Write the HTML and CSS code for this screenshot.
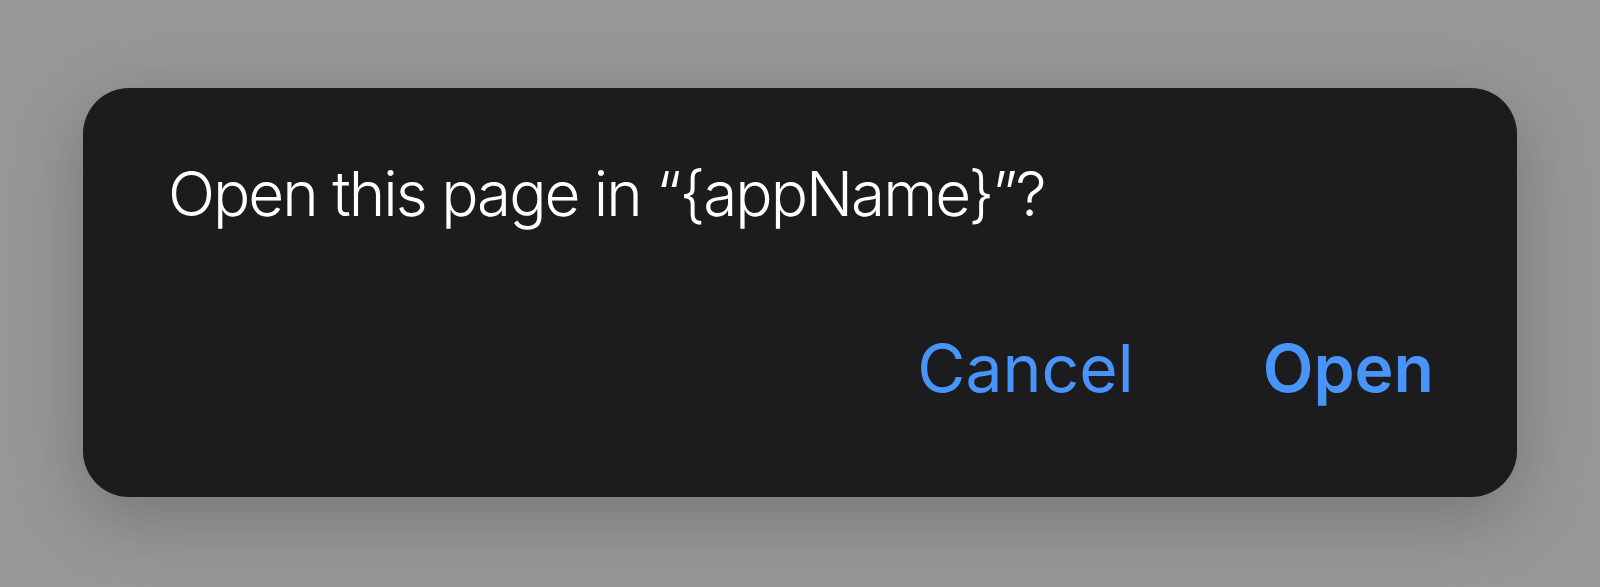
FILE: index.html
```html
<!DOCTYPE html>
<html>
<head>
<meta charset="utf-8">
<link rel="stylesheet" href="styles.css">
</head>
<body>
<div class="stage">
  <div class="dialog">
    <p class="title">Open this page in “{appName}”?</p>
    <div class="actions">
      <span class="btn">Cancel</span>
      <span class="btn primary">Open</span>
    </div>
  </div>
</div>
</body>
</html>
```
FILE: styles.css
```css
html, body {
  margin: 0;
  height: 100%;
}
body {
  background: #979797;
  font-family: Inter, "Noto Sans", sans-serif;
  overflow: hidden;
}
.stage {
  padding: 88px 83px 0 83px;
}
.dialog {
  height: 409px;
  box-sizing: border-box;
  background: #1c1c1e;
  border-radius: 46px;
  box-shadow: 0 20px 70px rgba(0, 0, 0, 0.22);
  padding: 66px 83px 0 85px;
  display: flex;
  flex-direction: column;
}
.title {
  margin: 0;
  color: #ffffff;
  font-size: 62px;
  font-weight: 300;
  line-height: 80px;
  letter-spacing: -2px;
}
.actions {
  margin-top: auto;
  margin-bottom: 89px;
  display: flex;
  justify-content: flex-end;
  gap: 129px;
}
.btn {
  color: #4894f8;
  font-size: 66px;
  line-height: 80px;
  font-weight: 400;
}
.btn.primary {
  font-weight: 600;
}
```
